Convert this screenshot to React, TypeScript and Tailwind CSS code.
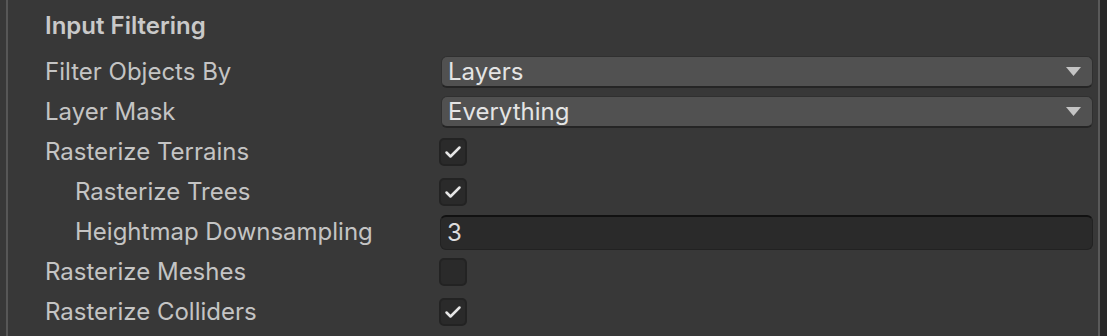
// Unity-style inspector section: Input Filtering

type Row =
  | { kind: 'dropdown'; label: string; value: string; indent?: boolean }
  | { kind: 'check'; label: string; checked: boolean; indent?: boolean }
  | { kind: 'field'; label: string; value: string; indent?: boolean }

const rows: Row[] = [
  { kind: 'dropdown', label: 'Filter Objects By', value: 'Layers' },
  { kind: 'dropdown', label: 'Layer Mask', value: 'Everything' },
  { kind: 'check', label: 'Rasterize Terrains', checked: true },
  { kind: 'check', label: 'Rasterize Trees', checked: true, indent: true },
  { kind: 'field', label: 'Heightmap Downsampling', value: '3', indent: true },
  { kind: 'check', label: 'Rasterize Meshes', checked: false },
  { kind: 'check', label: 'Rasterize Colliders', checked: true },
]

function Checkbox({ checked }: { checked: boolean }) {
  return (
    <div className="w-[28px] h-[28px] rounded-[5px] bg-[#2a2a2a] border-2 border-[#232323] flex items-center justify-center">
      {checked && (
        <svg width="18" height="14" viewBox="0 0 18 14" fill="none">
          <path d="M2.5 7.5 L6.5 11.5 L15.5 2.5" stroke="#e6e6e6" strokeWidth="2.5" strokeLinecap="round" strokeLinejoin="round" />
        </svg>
      )}
    </div>
  )
}

function Dropdown({ value }: { value: string }) {
  return (
    <div className="flex-1 ml-[2px] h-[32px] rounded-[6px] bg-[#515151] border border-[#303030] border-b-2 border-b-[#252525] flex items-center justify-between pl-[6px] pr-[11px]">
      <span className="text-[#e4e4e4]">{value}</span>
      <svg width="15" height="9" viewBox="0 0 15 9">
        <path d="M0 0 H15 L7.5 9 Z" fill="#c4c4c4" />
      </svg>
    </div>
  )
}

export default function App() {
  return (
    <div
      className="flex w-[1107px] h-[336px] bg-[#383838] text-[24px] leading-none"
      style={{ fontFamily: 'Inter, "Noto Sans", sans-serif' }}
    >
      <div className="w-[6px] bg-[#383838]" />
      <div className="w-[2px] bg-[#575757]" />

      <div className="flex-1 flex flex-col pt-[6px] pl-[37px] pr-[5px]">
        {/* Titre de la section */}
        <div className="h-[40px] flex items-center font-semibold text-[#c9c9c9]">Input Filtering</div>

        <div className="flex flex-col mt-[6px]">
          {rows.map(r => (
            <div key={r.label} className="h-[40px] flex items-center">
              <div className={`w-[394px] text-[#c4c4c4] ${r.indent ? 'pl-[30px]' : ''}`}>{r.label}</div>
              <div className="flex-1 flex items-center">
                {r.kind === 'dropdown' && <Dropdown value={r.value} />}
                {r.kind === 'check' && <Checkbox checked={r.checked} />}
                {r.kind === 'field' && (
                  <div className="flex-1 ml-[1px] h-[35px] rounded-[6px] bg-[#2a2a2a] border border-[#222222] border-t-2 border-t-[#111111] flex items-center pl-[6px] text-[#dcdcdc]">
                    {r.value}
                  </div>
                )}
              </div>
            </div>
          ))}
        </div>
      </div>

      <div className="w-[2px] bg-[#595959]" />
      <div className="w-[7px] bg-[#282828]" />
    </div>
  )
}
